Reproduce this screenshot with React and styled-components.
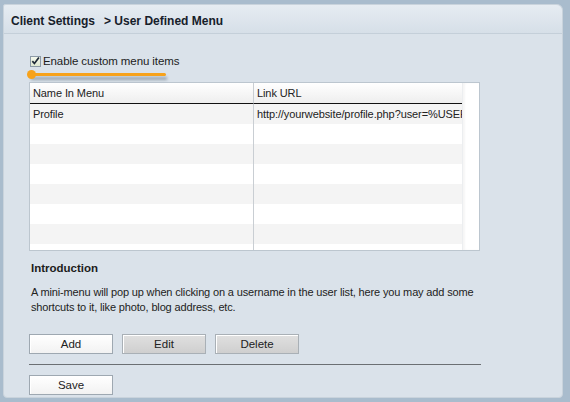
import React from "react";
import styled, { createGlobalStyle } from "styled-components";

const GlobalStyle = createGlobalStyle`
  html, body {
    margin: 0;
    padding: 0;
    background: #a9bccd;
  }
  body {
    font-family: "Liberation Sans", Arial, sans-serif;
    font-size: 11px;
    color: #1c1c1c;
  }
`;

const Panel = styled.div`
  box-sizing: border-box;
  margin: 4px 7px 0 3px;
  width: 560px;
  height: 394px;
  background: #dae2ea;
  border: 1px solid #c9d3dc;
  border-radius: 2px 6px 4px 4px;
  display: flex;
  flex-direction: column;
`;

const Header = styled.div`
  box-sizing: border-box;
  height: 29px;
  display: flex;
  align-items: center;
  padding: 4px 0 0 7px;
  font-weight: bold;
  font-size: 12px;
  color: #16202a;
  background: linear-gradient(#e6ecf2, #d6dfe8);
  border-bottom: 1px solid #c4cfd9;
  border-radius: 2px 6px 0 0;
`;

const Crumb = styled.span`
  margin-left: 9px;
`;

const Body = styled.div`
  padding: 21px 0 0 25px;
  display: flex;
  flex-direction: column;
`;

const CheckRow = styled.label`
  position: relative;
  display: flex;
  align-items: center;
  height: 12px;
  margin-left: 1px;
  gap: 2px;
  font-size: 11.5px;
  letter-spacing: -0.1px;
`;

const Box = styled.span`
  box-sizing: border-box;
  width: 11px;
  height: 11px;
  border: 1px solid #8c9aa6;
  background: linear-gradient(#f4f8ec, #dfe8d2);
  display: flex;
  align-items: center;
  justify-content: center;
`;

const Highlight = styled.span`
  position: absolute;
  left: -3px;
  top: 16px;
  width: 141px;
  height: 10px;
  pointer-events: none;
`;

const HighlightShadow = styled.span`
  position: absolute;
  left: 4px;
  top: 6px;
  width: 136px;
  height: 3px;
  background: #8592a0;
  filter: blur(1.5px);
  opacity: 0.8;
`;

const HighlightLine = styled.span`
  position: absolute;
  left: 3px;
  top: 2px;
  width: 136px;
  height: 3px;
  background: #f7a21b;
  border-radius: 2px;
`;

const HighlightDot = styled.span`
  position: absolute;
  left: 0;
  top: -1px;
  width: 9px;
  height: 9px;
  border-radius: 50%;
  background: #f7a21b;
`;

const Table = styled.div`
  box-sizing: border-box;
  margin-top: 15px;
  width: 451px;
  height: 169px;
  background: #fff;
  border: 1px solid #bcc6cf;
  display: flex;
  overflow: hidden;
`;

const Grid = styled.div`
  width: 432px;
  display: grid;
  grid-template-columns: 224px 208px;
  grid-template-rows: 21px;
  grid-auto-rows: 20px;
  align-content: start;
`;

const Gutter = styled.div`
  flex: 1;
  border-left: 1px solid #eceef0;
  box-shadow: inset 2px 0 2px rgba(0, 0, 0, 0.04);
`;

const HeadCell = styled.div`
  box-sizing: border-box;
  height: 21px;
  display: flex;
  align-items: center;
  padding-left: 3px;
  background: linear-gradient(#ffffff, #eeeeee);
  border-bottom: 1px solid #111;
  border-right: ${(p) => (p.last ? "none" : "1px solid #c9ced3")};
  font-size: 11px;
  letter-spacing: -0.1px;
  color: #222;
`;

const Cell = styled.div`
  height: 20px;
  display: flex;
  align-items: center;
  padding-left: 3px;
  background: ${(p) => (p.odd ? "#fff" : "#f4f4f4")};
  border-right: ${(p) => (p.last ? "none" : "1px solid #c9ced3")};
  white-space: nowrap;
  overflow: hidden;
  font-size: 11px;
  letter-spacing: -0.1px;
  color: #222;
`;

const Heading = styled.div`
  margin-top: 11px;
  margin-left: 2px;
  font-weight: bold;
  font-size: 11.5px;
  color: #1c1c1c;
`;

const Text = styled.p`
  margin: 11px 0 0 2px;
  width: 460px;
  line-height: 15px;
  font-size: 11px;
  letter-spacing: -0.15px;
  color: #222;
`;

const Buttons = styled.div`
  display: flex;
  gap: 9px;
  margin-top: 19px;
`;

const Button = styled.button`
  box-sizing: border-box;
  width: 84px;
  height: 20px;
  padding: 0;
  font-family: "Liberation Sans", Arial, sans-serif;
  font-size: 11.5px;
  color: #222;
  border: 1px solid ${(p) => (p.gray ? "#a9b0b6" : "#9ea8b1")};
  background: ${(p) =>
    p.gray
      ? "linear-gradient(#e0e0e0, #cfcfcf)"
      : "linear-gradient(#ffffff, #f2f2f2)"};
  box-shadow: inset 1px 1px 0 #fff;
  cursor: pointer;
`;

const Rule = styled.hr`
  margin: 10px 0 0 0;
  width: 452px;
  border: none;
  border-top: 1px solid #6b6f73;
`;

const SaveRow = styled.div`
  margin-top: 10px;
`;

const rows = [
  ["Profile", "http://yourwebsite/profile.php?user=%USERNAME%"],
  ["", ""],
  ["", ""],
  ["", ""],
  ["", ""],
  ["", ""],
  ["", ""],
  ["", ""],
];

export default function App() {
  return (
    <>
      <GlobalStyle />
      <Panel>
        <Header>
          Client Settings<Crumb>&gt; User Defined Menu</Crumb>
        </Header>
        <Body>
          <CheckRow>
            <Box>
              <svg width="10" height="10" viewBox="0 0 10 10">
                <path
                  d="M1.5 5.2 L3.8 7.8 L8.8 1.2"
                  fill="none"
                  stroke="#1d2836"
                  strokeWidth="1.9"
                />
              </svg>
            </Box>
            Enable custom menu items
            <Highlight>
              <HighlightShadow />
              <HighlightLine />
              <HighlightDot />
            </Highlight>
          </CheckRow>
          <Table>
            <Grid>
              <HeadCell>Name In Menu</HeadCell>
              <HeadCell last>Link URL</HeadCell>
              {rows.map((r, i) => (
                <React.Fragment key={i}>
                  <Cell odd={i % 2 === 1}>{r[0]}</Cell>
                  <Cell odd={i % 2 === 1} last>
                    {r[1]}
                  </Cell>
                </React.Fragment>
              ))}
            </Grid>
            <Gutter />
          </Table>
          <Heading>Introduction</Heading>
          <Text>
            A mini-menu will pop up when clicking on a username in the user
            list, here you may add some shortcuts to it, like photo, blog
            address, etc.
          </Text>
          <Buttons>
            <Button>Add</Button>
            <Button gray>Edit</Button>
            <Button gray>Delete</Button>
          </Buttons>
          <Rule />
          <SaveRow>
            <Button>Save</Button>
          </SaveRow>
        </Body>
      </Panel>
    </>
  );
}
